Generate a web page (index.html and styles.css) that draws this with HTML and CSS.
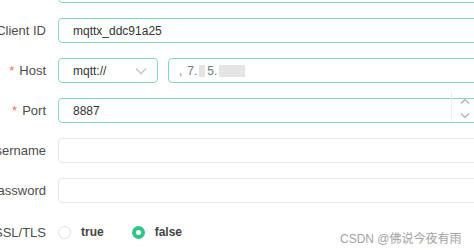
FILE: index.html
```html
<!DOCTYPE html>
<html lang="zh-CN">
<head>
  <meta charset="UTF-8" />
  <title>MQTT 连接设置</title>
  <link rel="stylesheet" href="styles.css">
</head>
<body>
  <form class="conn-form">
    <label class="field-label"></label>
    <div class="field"><div class="input focus"></div></div>

    <label class="field-label">Client ID</label>
    <div class="field"><div class="input focus">mqttx_ddc91a25</div></div>

    <label class="field-label"><span class="req">*</span>Host</label>
    <div class="field host">
      <div class="input focus select">
        <span>mqtt://</span>
        <svg class="chevron" width="12" height="8" viewBox="0 0 12 8"><path d="M1 1.5 L6 6.5 L11 1.5" fill="none" stroke="#c0c4cc" stroke-width="1.3"/></svg>
      </div>
      <div class="input focus masked">
        <span class="dot">,</span><span class="digit">7.</span><span class="blk"></span><span class="digit">5.</span><span class="blk wide"></span>
      </div>
    </div>

    <label class="field-label"><span class="req">*</span>Port</label>
    <div class="field">
      <div class="input focus number">
        <span>8887</span>
        <div class="spin">
          <svg width="10" height="7" viewBox="0 0 10 7"><path d="M1 5.5 L5 1.5 L9 5.5" fill="none" stroke="#a8abb2" stroke-width="1.1"/></svg>
          <svg width="10" height="7" viewBox="0 0 10 7"><path d="M1 1.5 L5 5.5 L9 1.5" fill="none" stroke="#a8abb2" stroke-width="1.1"/></svg>
        </div>
      </div>
    </div>

    <label class="field-label">Username</label>
    <div class="field"><div class="input"></div></div>

    <label class="field-label">Password</label>
    <div class="field"><div class="input"></div></div>

    <label class="field-label ssl">SSL/TLS</label>
    <div class="field radios">
      <span class="radio"><i class="circle"></i>true</span>
      <span class="radio checked"><i class="circle"></i>false</span>
    </div>
  </form>

  <div class="watermark">CSDN @佛说今夜有雨</div>
</body>
</html>
```

FILE: styles.css
```css
body {
  margin: 0;
  background: #fff;
  font-family: "Liberation Sans", "Noto Sans CJK SC", sans-serif;
  overflow: hidden;
}
.conn-form {
  display: grid;
  grid-template-columns: 46px 420px;
  grid-auto-rows: 25px;
  column-gap: 12px;
  row-gap: 15px;
  margin-top: -22px;
}
.field-label {
  display: flex;
  justify-content: flex-end;
  align-items: center;
  white-space: nowrap;
  font-size: 13px;
  color: #4d4d4d;
}
.field-label.ssl { padding-top: 3px; }
.req { color: #f56c6c; margin-right: 5px; }
.field { display: flex; gap: 10px; }
.input {
  flex: 1;
  box-sizing: border-box;
  height: 25px;
  border: 1px solid #e4e7ed;
  border-radius: 4px;
  padding: 0 14px;
  display: flex;
  align-items: center;
  font-size: 12px;
  color: #333;
}
.input.focus { border-color: #8ad6b8; }
.select { flex: 0 0 100px; justify-content: space-between; padding-right: 10px; }
.masked { padding-left: 10px; gap: 2px; }
.dot { color: #888; margin-right: 3px; }
.digit { color: #777; }
.blk { width: 6px; height: 12px; background: #e4e4e4; }
.blk.wide { width: 26px; }
.number { position: relative; }
.spin {
  position: absolute;
  right: 0;
  top: -7px;
  bottom: 0;
  width: 26px;
  border-left: 1px solid #ececec;
  display: flex;
  flex-direction: column;
  align-items: flex-start;
  justify-content: space-around;
  padding: 2px 0 0 8px;
  box-sizing: border-box;
}
.radios { padding-top: 3px; align-items: center; gap: 28px; font-size: 12px; font-weight: bold; color: #444; }
.radio { display: flex; align-items: center; gap: 10px; }
.circle {
  box-sizing: border-box;
  width: 13px;
  height: 13px;
  border: 1px solid #dcdfe6;
  border-radius: 50%;
}
.checked .circle {
  border: 4.5px solid #34c388;
  background: #fff;
}
.watermark {
  position: absolute;
  left: 340px;
  top: 229px;
  font-size: 12px;
  color: #a3a3a3;
}
```
